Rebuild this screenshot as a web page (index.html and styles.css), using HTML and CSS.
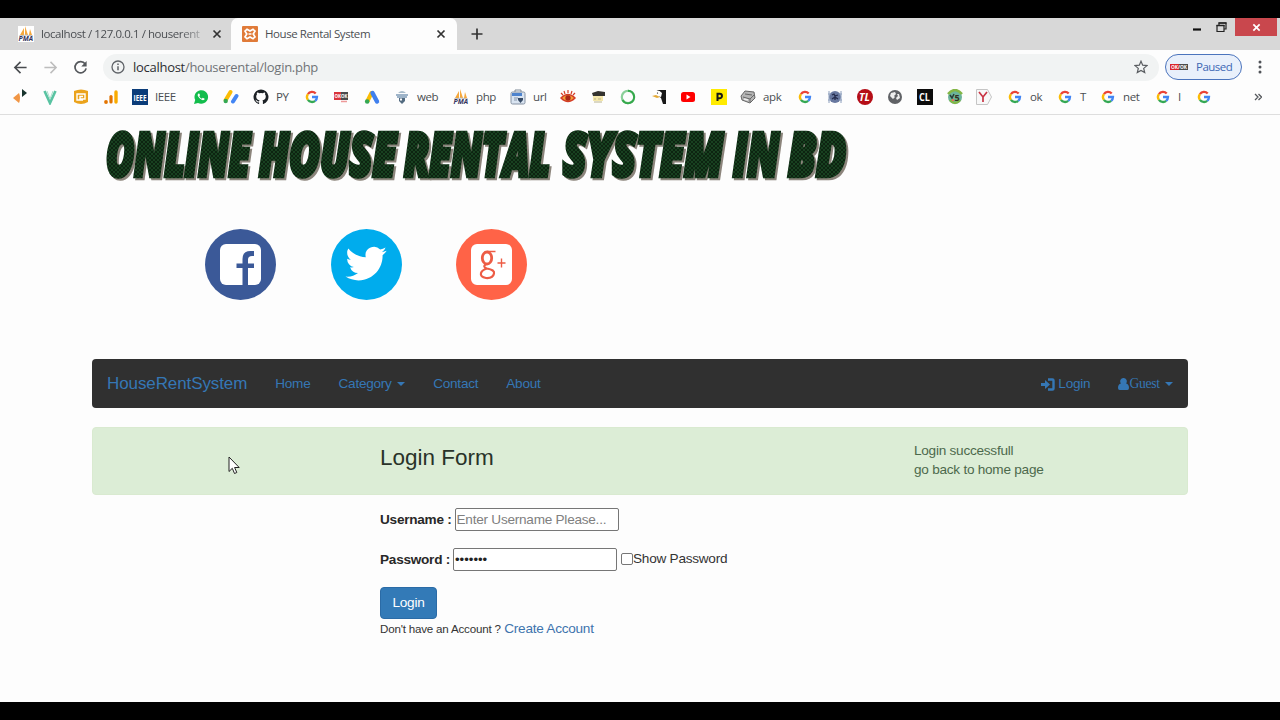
FILE: index.html
```html
<!DOCTYPE html>
<html lang="en">
<head>
<meta charset="utf-8">
<title>House Rental System</title>
<link rel="stylesheet" href="styles.css">
</head>
<body>
<svg class="defs" width="0" height="0" aria-hidden="true">
  <defs>
    <symbol id="google" viewBox="0 0 16 16"><g fill="none" stroke-width="2.3"><path d="M3.9 5.1A5 5 0 0 1 11.7 4.6" stroke="#ea4335"/><path d="M3.9 5.1a5 5 0 0 0 0 5.8" stroke="#fbbc05"/><path d="M3.9 10.9a5 5 0 0 0 7.3.9" stroke="#34a853"/><path d="M8 8h5a5 5 0 0 1-1.8 3.8" stroke="#4285f4"/></g></symbol>
    <symbol id="pma" viewBox="0 0 16 16"><path d="M2 9 6 2v7zM7 9V0l3 9zM11 9l1-6 2 6z" fill="#f5a83d"/><path d="M1 10q7-2 14 0" stroke="#bbb" fill="none"/><text x=".5" y="15.300" font-size="6.600" font-weight="700" font-style="italic" letter-spacing="0" fill="#33335d" textLength="14.500" lengthAdjust="spacingAndGlyphs">PMA</text></symbol>
    <symbol id="okok" viewBox="0 0 16 16"><path d="M1 3h7v8H1z" fill="#d9333b"/><path d="M8 3h7v8H8z" fill="#4b4b4b"/><text x="1.500" y="9.300" font-size="6" font-weight="700" letter-spacing="0" fill="#fff" textLength="13" lengthAdjust="spacingAndGlyphs">OKOK</text><path d="M8 12.500h6" stroke="#e99" stroke-width="1.500"/></symbol>
    <symbol id="close" viewBox="0 0 10 10"><path d="m1.500 1.500 7 7m0-7-7 7" stroke="currentColor" stroke-width="1.700"/></symbol>
  </defs>
</svg>

<div class="browser">
  <div class="tabstrip">
    <div class="tab tab-idle">
      <svg class="favicon"><rect width="16" height="16" fill="#fff"/><use href="#pma"/></svg>
      <span class="tab-title tab-fade">localhost / 127.0.0.1 / houserent</span>
      <svg class="tab-close"><use href="#close"/></svg>
    </div>
    <div class="tab tab-active">
      <svg class="favicon" viewBox="0 0 16 16"><rect width="16" height="16" rx="1" fill="#e07b39"/><path d="M5 3.200 8 5l3-1.800 2 2L11.200 8l1.800 2.800-2 2L8 11l-3 1.800-2-2L4.800 8 3 5.200z" fill="none" stroke="#fff" stroke-width="1.700"/><path d="M6.500 8h3" stroke="#fff" stroke-width="1.500"/></svg>
      <span class="tab-title">House Rental System</span>
      <svg class="tab-close"><use href="#close"/></svg>
    </div>
    <svg class="new-tab" viewBox="0 0 12 12"><path d="M6 .5v11M.5 6h11" stroke="#333" stroke-width="1.700"/></svg>
    <div class="window-buttons">
      <svg class="minimize" viewBox="0 0 8 3"><path d="M0 1.500h8" stroke="#111" stroke-width="2.200"/></svg>
      <svg class="restore" viewBox="0 0 11 10"><path d="M1 3.500h7v6H1zM3 3V1h7v6H8.500" fill="none" stroke="#222" stroke-width="1.200"/><path d="M.5 3.500h8M2.500 1h8" stroke="#222" stroke-width="1.600"/></svg>
      <span class="window-close"><svg viewBox="0 0 10 10"><path d="m1.500 1.500 7 7m0-7-7 7" stroke="#fff" stroke-width="1.900"/></svg></span>
    </div>
  </div>

  <div class="toolbar">
    <svg class="tool" viewBox="0 0 16 16"><path d="M14.500 8H2M8 2 2 8l6 6" fill="none" stroke="#484b4f" stroke-width="1.700"/></svg>
    <svg class="tool tool-forward" viewBox="0 0 16 16"><path d="M1.500 8H14M8 2l6 6-6 6" fill="none" stroke="#bdbdbd" stroke-width="1.600"/></svg>
    <svg class="tool" viewBox="0 0 16 16"><path d="M13 4.200A6 6 0 1 0 14 9" fill="none" stroke="#55585c" stroke-width="1.800"/><path d="M14.500 1v6H8.800z" fill="#55585c"/></svg>
    <div class="address">
      <svg class="info" viewBox="0 0 14 14"><circle cx="7" cy="7" r="6" fill="none" stroke="#5f6368" stroke-width="1.300"/><path d="M7 6.200v4M7 3.500v1.500" stroke="#5f6368" stroke-width="1.500"/></svg>
      <span class="url"><span class="url-host">localhost</span>/houserental/login.php</span>
      <svg class="star" viewBox="0 0 14 14"><path d="m7 1.200 1.700 4 4.300.4-3.300 2.800 1 4.200L7 10.400l-3.700 2.200 1-4.200L1 5.600l4.300-.4z" fill="none" stroke="#5a5d61" stroke-width="1.200"/></svg>
    </div>
    <div class="profile">
      <svg width="18" height="10" viewBox="0 0 18 10"><path d="M0 2h9v6H0z" fill="#d9252b"/><path d="M9 2h9v6H9z" fill="#4c4c4c"/><text x="1" y="7" font-size="5" font-weight="700" letter-spacing="0" fill="#fff" textLength="16" lengthAdjust="spacingAndGlyphs">OK/OK</text></svg>
      <span>Paused</span>
    </div>
    <svg class="menu" viewBox="0 0 4 14"><g fill="#505358"><circle cx="2" cy="2" r="1.500"/><circle cx="2" cy="7" r="1.500"/><circle cx="2" cy="12" r="1.500"/></g></svg>
  </div>

  <div class="bookmarks">
    <div><svg viewBox="0 0 16 16"><path d="m1 9 6-5q2 5 0 10z" fill="#f19645"/><path d="m10 0 5 4-5 4z" fill="#18352e"/></svg></div>
    <div><svg viewBox="0 0 16 16"><path d="m2.500 2 5.500 12 5.500-12" fill="none" stroke="#59c3a2" stroke-width="2.600"/><path d="m5 2 3 8 3-8" fill="none" stroke="#a8dfcb"/></svg></div>
    <div><svg viewBox="0 0 16 16"><path d="M1 2q7-3 14 0v11q-7 4-14 0z" fill="#eba31c"/><path d="M10 11H4V5h8v5H7V7.500h3" fill="none" stroke="#fff" stroke-width="1.400"/></svg></div>
    <div><svg viewBox="0 0 16 16"><circle cx="3" cy="13" r="1.900" fill="#e37400"/><path d="M8 7.500V13" stroke="#e37400" stroke-width="3.200" stroke-linecap="round"/><path d="M13 3v10" stroke="#f9ab00" stroke-width="3.400" stroke-linecap="round"/></svg></div>
    <div><svg viewBox="0 0 16 16"><path d="M0 0h16v16H0z" fill="#0b3c79"/><text x="1.500" y="11.500" font-size="9" font-weight="700" letter-spacing="0" fill="#fff" textLength="13" lengthAdjust="spacingAndGlyphs">IEEE</text></svg><span>IEEE</span></div>
    <div><svg viewBox="0 0 16 16"><path d="m1 15 1.200-4A6.800 6.800 0 1 1 5 13.900z" fill="#12bd4c"/><path d="M5.500 4.500q-2 1.500.8 4.500T11.200 10.800q1-.8.1-1.300L9.700 8.800 8.800 9.700Q7 9 6.300 7.200L7 6.300 6.500 4.800z" fill="#fff"/></svg></div>
    <div><svg viewBox="0 0 16 16"><path d="m2.700 11 4.800-8" stroke="#fbbc04" stroke-width="4" stroke-linecap="round"/><circle cx="2.700" cy="12" r="2.200" fill="#34a853"/><path d="m10 12.500 3.500-5.500" stroke="#4285f4" stroke-width="4" stroke-linecap="round"/></svg></div>
    <div><svg viewBox="0 0 16 16"><path d="M8 .5a7.500 7.500 0 0 0-2.400 14.600c.4.100.5-.2.500-.4v-1.400c-2.100.5-2.600-.9-2.600-.9-.3-.9-.8-1.100-.8-1.100-.7-.5.100-.5.100-.5.700.1 1.100.8 1.100.8.700 1.100 1.700.8 2.200.6 0-.5.300-.8.500-1-1.700-.2-3.400-.9-3.400-3.700 0-.9.300-1.500.8-2-.1-.2-.4-1 .1-2 0 0 .6-.2 2 .7a7 7 0 0 1 3.800 0c1.400-.9 2-.7 2-.7.500 1 .2 1.800.1 2 .5.500.8 1.100.8 2 0 2.800-1.700 3.500-3.400 3.700.300.200.5.700.5 1.400v2.100c0 .2.100.5.500.4A7.500 7.500 0 0 0 8 .5" fill="#1c2126"/></svg><span>PY</span></div>
    <div><svg><use href="#google"/></svg></div>
    <div><svg><use href="#okok"/></svg></div>
    <div><svg viewBox="0 0 16 16"><path d="m3.500 12 4-8" stroke="#fbbc04" stroke-width="4" stroke-linecap="round"/><circle cx="3.200" cy="12.500" r="2.300" fill="#34a853"/><path d="m8.500 4 4.500 8.500" stroke="#4080ee" stroke-width="4.400" stroke-linecap="round"/></svg></div>
    <div><svg viewBox="0 0 16 16"><path d="M4 4q4-4 8 0z" fill="#a9bccb"/><path d="M2 6h12M3 8h10" stroke="#7f9cb8" stroke-width="1.600" fill="none"/><path d="M5 9h6v3l-3 3-3-3z" fill="#536b80"/><path d="M6 9.500h2v2H6z" fill="#fff"/></svg><span>web</span></div>
    <div><svg><use href="#pma"/></svg><span>php</span></div>
    <div><svg viewBox="0 0 16 16"><path d="M5 3V1h6v2" fill="none" stroke="#7c8896"/><rect x="1" y="3" width="14" height="12" rx="1.500" fill="#d9e4f1" stroke="#8591a1"/><path d="M2 4h10v3H2z" fill="#4d83ce"/><path d="M4 9h4m-4 2h3" stroke="#8796ab"/><path d="M8 9h5v2l-2.500 3L8 11z" fill="#374b66"/></svg><span>url</span></div>
    <div><svg viewBox="0 0 16 16"><path d="M1 9q7-7 14 0-7 7-14 0z" fill="#f3a13a" stroke="#d43d27" stroke-width="1.500"/><circle cx="8" cy="9" r="2.700" fill="#a92618"/><path d="m1 4 2 2m1-4 1 3m3-4v3m4-2-1 3m4-1-2 2" stroke="#d43d27" stroke-width="1.200"/></svg></div>
    <div><svg viewBox="0 0 16 16"><path d="m2 4 6-2 7 1v4H3z" fill="#34332f"/><path d="M3 7h10v5H3z" fill="#f4e7ac"/><path d="M4 10h2m2 0h3M4 13h8" stroke="#b9b38d"/></svg></div>
    <div><svg viewBox="0 0 16 16"><circle cx="8" cy="8" r="6.200" fill="none" stroke="#8bd09a" stroke-width="2.200"/><path d="M8 1.800A6.200 6.200 0 1 1 2.500 11" fill="none" stroke="#35a84b" stroke-width="2"/></svg></div>
    <div><svg viewBox="0 0 16 16"><path d="M6 1h9v14h-3L10 9 5 5z" fill="#181818"/><path d="M1 3q6-4 10 1l-1 4-4-1z" fill="#fff"/><path d="M5 6 1 7l5 2 3-1z" fill="#e4aa37"/><circle cx="6.500" cy="4" r=".6"/></svg></div>
    <div><svg viewBox="0 0 16 16"><rect x="1" y="3" width="14" height="10" rx="2.500" fill="#f00"/><path d="m6.500 5.500 4 2.500-4 2.500z" fill="#fff"/></svg></div>
    <div><svg viewBox="0 0 16 16"><path d="M0 0h16v16H0z" fill="#ffeb00"/><path d="M6.500 12V4.800h2.200a2.200 2.200 0 0 1 0 4.500H7" fill="none" stroke="#171717" stroke-width="2"/></svg></div>
    <div><svg viewBox="0 0 16 16"><path d="m1 7 4-5 9 1 1 6-5 5-8-3z" fill="#b5b5b5" stroke="#666"/><path d="m3 8 7 2 4-4M5 5l7 1M10 10v3" fill="none" stroke="#666"/><path d="m4 10 4 1" stroke="#eee" stroke-width="1.500"/></svg><span>apk</span></div>
    <div><svg><use href="#google"/></svg></div>
    <div><svg viewBox="0 0 16 16"><circle cx="8" cy="8" r="6" fill="#68789f"/><path d="M2 2v12m12-12v12M1 5h3m8 0h3M1 11h3m8 0h3" stroke="#8c9ebc"/><path d="m5 6 2-1 1 2 3-1m-6 4 3-2 3 2m-3-4v5" stroke="#252c4d" fill="none" stroke-width="1.300"/></svg></div>
    <div><svg viewBox="0 0 16 16"><circle cx="8" cy="8" r="8" fill="#b50e17"/><text x="2" y="12" font-size="10" font-style="italic" font-weight="700" letter-spacing="0" fill="#fff" textLength="11" lengthAdjust="spacingAndGlyphs">TL</text></svg></div>
    <div><svg viewBox="0 0 16 16"><circle cx="8" cy="8" r="7" fill="#606266"/><path d="m4 4 4-1 1 2-2 2 1 1-2 2-3-3zm6 1 2 0 1 4-3 2-1-2 2-2z" fill="#eee"/></svg></div>
    <div><svg viewBox="0 0 16 16"><path d="M0 0h16v16H0z" fill="#0c0c0c"/><text x="2" y="12" font-size="11" font-weight="700" letter-spacing="0" fill="#fff" textLength="11" lengthAdjust="spacingAndGlyphs">CL</text></svg></div>
    <div><svg viewBox="0 0 16 16"><circle cx="8" cy="8" r="7" fill="#6bb39a"/><path d="M1 5q7-8 14 0M3 11q5 6 10 0" stroke="#83b646" stroke-width="2.500" fill="none"/><path d="m3 6 2 3 2-4" stroke="#283c39" stroke-width="1.500" fill="none"/><text x="7.500" y="12" font-size="9" font-weight="700" fill="#332f20">5</text><path d="M5 11h2" stroke="#ed6b5e" stroke-width="2"/></svg></div>
    <div><svg viewBox="0 0 16 16"><path d="M.5.500h11l4 7.500-4 7.500H.5z" fill="#f8f8f8" stroke="#c5c5c5"/><path d="m3 3 4 5 4-5M7 8v5" fill="none" stroke="#c93545" stroke-width="1.700"/></svg></div>
    <div><svg><use href="#google"/></svg><span>ok</span></div>
    <div><svg><use href="#google"/></svg><span>T</span></div>
    <div><svg><use href="#google"/></svg><span>net</span></div>
    <div><svg><use href="#google"/></svg><span>I</span></div>
    <div><svg><use href="#google"/></svg></div>
    <div class="more"><svg viewBox="0 0 8 8"><path d="m1 1 3 3-3 3m3.500-6 3 3-3 3" fill="none" stroke="#55585c" stroke-width="1.300"/></svg></div>
  </div>
</div>

<main class="page">
  <header class="banner">
    <svg class="headline" width="760" height="64" viewBox="0 0 760 64">
      <defs><pattern id="weave" width="4" height="4" patternUnits="userSpaceOnUse"><path d="M0 0h4v4H0z" fill="#0d2411"/><path d="m0 0 2 2 2-2M0 4l2-2 2 2" fill="none" stroke="#1c4d27" stroke-width=".7"/></pattern></defs>
      <g class="headline-words" fill="url(#weave)" stroke="url(#weave)" transform="translate(2 51)">
        <text textLength="144" lengthAdjust="spacingAndGlyphs">ONLINE</text>
        <text x="153" textLength="137" lengthAdjust="spacingAndGlyphs">HOUSE</text>
        <text x="298" textLength="146" lengthAdjust="spacingAndGlyphs">RENTAL</text>
        <text x="457" textLength="160" lengthAdjust="spacingAndGlyphs">SYSTEM</text>
        <text x="627" textLength="46" lengthAdjust="spacingAndGlyphs">IN</text>
        <text x="682" textLength="58" lengthAdjust="spacingAndGlyphs">BD</text>
      </g>
    </svg>
    <div class="social">
      <svg viewBox="0 0 71 71"><circle cx="35.500" cy="35.500" r="35.500" fill="#3b5998"/><rect x="15" y="15" width="41" height="41" rx="6" fill="#fff"/><path d="M37.500 56V39h-6v-4.500h6V30q0-8 8-8H49v5h-2q-4 0-4 3.500v4h6V39h-6v17z" fill="#3b5998"/></svg>
      <svg viewBox="0 0 71 71"><circle cx="35.500" cy="35.500" r="35.500" fill="#00aced"/><path transform="translate(14.500 14) scale(1.720)" d="M23.950 4.570a10 10 0 0 1-2.820.77 4.960 4.960 0 0 0 2.160-2.720c-.95.550-2 .95-3.130 1.180a4.920 4.920 0 0 0-8.380 4.480C7.690 8.100 4.070 6.130 1.640 3.160a4.820 4.820 0 0 0-.67 2.480c0 1.710.87 3.210 2.190 4.100a4.900 4.900 0 0 1-2.230-.62v.06a4.920 4.920 0 0 0 3.950 4.830 5 5 0 0 1-2.210.08 4.940 4.940 0 0 0 4.600 3.420A9.870 9.870 0 0 1 0 19.540a14 14 0 0 0 7.550 2.210c9.060 0 14.010-7.500 14.010-13.980l-.02-.63a9.900 9.900 0 0 0 2.410-2.570z" fill="#fff"/></svg>
      <svg viewBox="0 0 71 71"><circle cx="35.500" cy="35.500" r="35.500" fill="#ff6347"/><rect x="15" y="15" width="41" height="41" rx="6" fill="#fff"/><g fill="none" stroke="#ed5c45"><ellipse cx="31" cy="29" rx="4.700" ry="6" stroke-width="2.800"/><path d="M31 22.500h8.500" stroke-width="1.500"/><path d="M30 35q-4 3 1 4.500 8 1.500 7 5-1 5-8 4.500-6-1-5-5 1-3 6-4.500" stroke-width="2.200"/><path d="M45.500 29.500v9M41.500 34h8" stroke-width="1.400"/></g></svg>
    </div>
  </header>

  <nav class="navbar">
    <a class="brand">HouseRentSystem</a>
    <a>Home</a>
    <a>Category <i class="caret"></i></a>
    <a>Contact</a>
    <a>About</a>
    <a class="nav-login"><svg width="14" height="13" viewBox="0 0 14 13"><path d="M7 1.500h4.500q1 0 1 1v8q0 1-1 1H7" fill="none" stroke="currentColor" stroke-width="2.400"/><path d="M0 5h4V2l5 4.500L4 11V8H0z" fill="currentColor"/></svg> Login</a>
    <a class="nav-guest"><svg width="11" height="12" viewBox="0 0 11 12"><path d="M5.500 0a3.200 3.400 0 0 1 2.600 5.500q2.900.7 2.900 4.500 0 2-1.700 2H1.700Q0 12 0 10q0-3.800 2.900-4.500A3.200 3.400 0 0 1 5.500 0" fill="currentColor"/></svg>Guest <i class="caret"></i></a>
  </nav>

  <section class="alert">
    <h1>Login Form</h1>
    <p>Login successfull<br>go back to home page</p>
    <svg class="pointer" width="12" height="19" viewBox="0 0 12 19"><path d="M1 1v14.500l3.300-3.200 2.200 5.200 2.300-1-2.200-5h4.600z" fill="#fff" stroke="#222"/></svg>
  </section>

  <form class="login">
    <div class="field"><label>Username :</label><input type="text" placeholder="Enter Username Please..."></div>
    <div class="field field-password"><label>Password :</label><input type="password" value="1234567"><span class="checkbox"></span><span>Show Password</span></div>
    <button type="button">Login</button>
    <div class="signup"><small>Don't have an Account ?</small> <a>Create Account</a></div>
  </form>
</main>
</body>
</html>
```
FILE: styles.css
```css
* { box-sizing: border-box; }
body {
  margin: 0;
  height: 720px;
  padding: 18px 0;
  overflow: hidden;
  background: #000;
  font: 13.6px/18.75px "Liberation Sans", Arial, sans-serif;
  letter-spacing: -.25px;
  color: #333;
}
svg { display: block; flex: none; }
.defs { position: absolute; }

/* browser chrome */
.browser { font-family: "Open Sans", "Noto Sans", sans-serif; background: #fdfdfd; }
.tabstrip { display: flex; height: 32px; background: #d8d8d8; color: #4b4e52; }
.tab { display: flex; align-items: center; height: 32px; font-size: 11.5px; letter-spacing: -.42px; }
.tab-idle { width: 231px; padding-left: 18px; }
.tab-active { width: 226px; padding-left: 11px; background: #fdfdfd; border-radius: 7px 7px 0 0; }
.favicon { width: 16px; height: 16px; margin-right: 7px; }
.tab-title { width: 164px; white-space: nowrap; }
.tab-fade { width: 160px; -webkit-mask-image: linear-gradient(90deg, #000 87%, rgba(0,0,0,.3)); mask-image: linear-gradient(90deg, #000 87%, rgba(0,0,0,.3)); }
.tab-close { width: 10px; height: 10px; margin-left: 11px; color: #333; }
.tab-active .tab-close { margin-left: 7px; }
.new-tab { width: 12px; height: 12px; margin: 10px 0 0 14px; }
.window-buttons { display: flex; margin-left: auto; padding-right: 3px; }
.minimize { width: 8px; height: 3px; margin: 10px 15px 0 0; }
.restore { width: 11px; height: 10px; margin: 4px 8px 0 0; }
.window-close { display: flex; width: 42px; height: 18px; align-items: center; justify-content: center; background: #c9474d; }
.window-close svg { width: 9px; height: 9px; }

.toolbar { display: flex; align-items: center; height: 34px; padding-left: 13px; }
.tool { width: 15px; height: 15px; margin-right: 15px; }
.address { display: flex; align-items: center; width: 1056px; height: 27px; padding: 0 11px 0 8px; border-radius: 14px; background: #f1f3f3; }
.info { width: 14px; height: 14px; margin-right: 8px; }
.url { font-size: 13px; color: #707377; letter-spacing: -.28px; }
.url-host { color: #2c2e31; }
.star { width: 14px; height: 14px; margin-left: auto; }
.profile { display: flex; align-items: center; width: 77px; height: 26px; margin-left: 6px; padding-left: 4px; gap: 8px; border: 1px solid #4b74bd; border-radius: 13px; background: #e9f0fb; color: #3d68b5; font-size: 11.5px; letter-spacing: -.5px; }
.menu { width: 4px; height: 14px; margin-left: 16px; }

.bookmarks {
  display: grid;
  grid-template-columns: 30px 31px 30px 29px 61px 30px 30px 51px 29px 31px 30px 59px 57px 50px 30px 30px 31px 29px 31px 29px 57px 30px 30px 30px 30px 30px 29px 31px 50px 43px 55px 41px 58px 16px;
  align-items: center;
  height: 31px;
  padding: 0 0 4px 12px;
  border-bottom: 1px solid #dedede;
  font-size: 11.5px;
  letter-spacing: -.4px;
  color: #4a4d51;
}
.bookmarks div { display: flex; align-items: center; gap: 7px; }
.bookmarks svg { width: 16px; height: 16px; }
.bookmarks .more svg { width: 8px; height: 8px; }

/* page */
.page { height: 587px; padding: 0 92px; background: #fdfdfd; }
.banner { height: 244px; padding: 10px 0 0 12px; }
.headline { overflow: visible; }
.headline-words { font-family: "Open Sans", sans-serif; font-weight: 800; font-style: italic; font-size: 60px; letter-spacing: 0; stroke-width: 4.5px; filter: drop-shadow(2px 2px 0 #8c857c); }
.social { display: flex; gap: 54px; padding: 40px 0 0 101px; }
.social svg { width: 71px; height: 71px; }
.social svg + svg { margin-left: .5px; }

.navbar { display: flex; align-items: center; height: 49px; padding: 1px 15px 0; background: #303030; border-radius: 4px; color: #3577b5; }
.navbar a { display: flex; align-items: center; margin-right: 28px; white-space: pre; }
.navbar .brand { font-size: 17px; letter-spacing: -.1px; }
.navbar .nav-login { margin-left: auto; }
.navbar .nav-guest { margin-right: 0; font-family: "Liberation Serif", serif; }
.caret { margin-left: 2px; border: 4px solid transparent; border-top-color: currentColor; border-bottom: 0; }

.alert { position: relative; display: flex; height: 68px; margin-top: 19px; padding: 14px 0 0 287px; background: #dcedd6; border: 1px solid #d9ead0; border-radius: 4px; }
.alert h1 { width: 534px; margin: 3px 0 0; font-size: 22.5px; line-height: 26px; font-weight: 400; letter-spacing: 0; color: #293329; }
.alert p { margin: 0; color: #4c694c; }
.pointer { position: absolute; left: 135px; top: 28px; }

.login { padding: 13px 0 0 288px; }
.field { display: flex; align-items: center; height: 23px; }
.field label { font-weight: 700; margin-right: 3px; padding-top: 1px; color: #282828; }
.field input { width: 164px; height: 23px; padding: 1px; border: 1px solid #767676; border-radius: 2px; background: #fff; font: inherit; letter-spacing: inherit; color: #222; }
.field input[type="password"] { font-size: 13.12px; letter-spacing: 0; }
.field input::placeholder { color: #808080; }
.field-password { margin-top: 17px; }
.checkbox { width: 12px; height: 12px; margin: -2px 0 0 4px; border: 1px solid #767676; border-radius: 2px; background: #fff; }
.login button { display: block; width: 57px; height: 32px; margin-top: 16px; padding: 1px 0 0; border: 1px solid #2b6ba6; border-radius: 4px; background: #337ab7; color: #fff; font: inherit; letter-spacing: inherit; }
.signup { padding-top: 1px; }
.signup small { font-size: 11.6px; letter-spacing: -.2px; }
.signup a { color: #3e74ad; }
```
